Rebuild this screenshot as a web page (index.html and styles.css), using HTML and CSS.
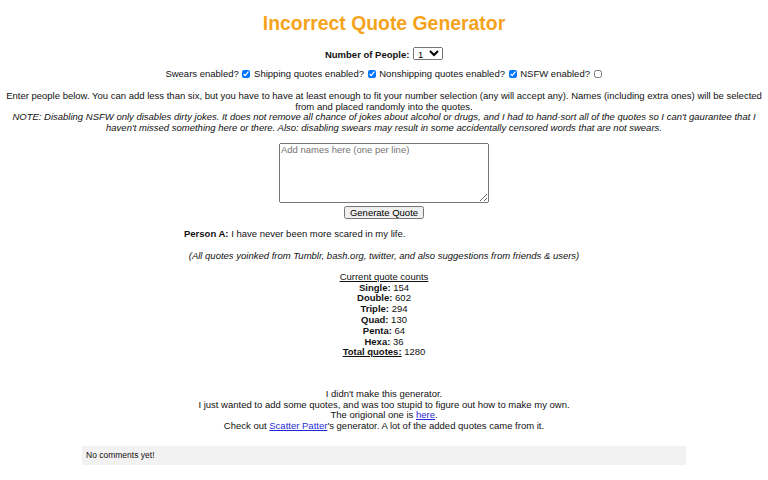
FILE: index.html
```html
<!DOCTYPE html>
<html lang="en">
<head>
  <meta charset="UTF-8" />
  <title>Incorrect Quote Generator</title>
  <meta name="viewport" content="width=device-width, initial-scale=1.0"/>
  <link rel="stylesheet" href="styles.css">
</head>
<body>

  <h1 class="title">Incorrect Quote Generator</h1>

  <div class="row">
    <b>Number of People:</b>
    <select class="people">
      <option>1</option>
      <option>2</option>
      <option>3</option>
      <option>4</option>
      <option>5</option>
      <option>6</option>
    </select>
  </div>

  <div class="row options">
    Swears enabled? <input type="checkbox" checked>
    Shipping quotes enabled? <input type="checkbox" checked>
    Nonshipping quotes enabled? <input type="checkbox" checked>
    NSFW enabled? <input type="checkbox">
  </div>

  <div class="info">
    Enter people below. You can add less than six, but you have to have at least enough to fit your number selection (any will accept any). Names (including extra ones) will be selected from and placed randomly into the quotes.<br>
    <i>NOTE: Disabling NSFW only disables dirty jokes. It does not remove all chance of jokes about alcohol or drugs, and I had to hand-sort all of the quotes so I can't gaurantee that I haven't missed something here or there. Also: disabling swears may result in some accidentally censored words that are not swears.</i>
  </div>

  <div class="names">
    <textarea placeholder="Add names here (one per line)"></textarea>
    <button class="generate">Generate Quote</button>
  </div>

  <div class="quote">
    <b>Person A:</b> I have never been more scared in my life.
  </div>

  <p class="credit"><i>(All quotes yoinked from Tumblr, bash.org, twitter, and also suggestions from friends &amp; users)</i></p>

  <div class="counts">
    <u>Current quote counts</u><br>
    <b>Single:</b> 154<br>
    <b>Double:</b> 602<br>
    <b>Triple:</b> 294<br>
    <b>Quad:</b> 130<br>
    <b>Penta:</b> 64<br>
    <b>Hexa:</b> 36<br>
    <b><u>Total quotes:</u></b> 1280
  </div>

  <div class="about">
    I didn't make this generator.<br>
    I just wanted to add some quotes, and was too stupid to figure out how to make my own.<br>
    The origional one is <a href="#">here</a>.<br>
    Check out <a href="#">Scatter Patter</a>'s generator. A lot of the added quotes came from it.
  </div>

  <div class="comments">No comments yet!</div>

</body>
</html>
```

FILE: styles.css
```css
body {
  margin: 0;
  padding: 0 4px;
  font-family: 'Liberation Sans', Arial, sans-serif;
  font-size: 9.5px;
  line-height: 10.6px;
  color: #111;
  text-align: center;
  background: white;
}

.title {
  color: #f5a31c;
  font-size: 19.4px;
  line-height: 24px;
  margin: 11px 0 12px;
}

.row {
  margin-bottom: 8px;
}

.people {
  font-size: 9.5px;
  height: 13px;
  width: 30px;
  padding: 0;
  margin-left: 1px;
}

.options input {
  width: 8px;
  height: 8px;
  margin: 0 1px;
  vertical-align: -1px;
}

.info {
  margin-top: 12px;
}

.names {
  margin-top: 9px;
}

.names textarea {
  display: block;
  margin: 0 auto;
  width: 210px;
  height: 60px;
  box-sizing: border-box;
  font-family: 'Liberation Sans', Arial, sans-serif;
  font-size: 9.5px;
  line-height: 10.6px;
  padding: 1px;
  resize: vertical;
}

.generate {
  margin-top: 3px;
  height: 13px;
  font-family: 'Liberation Sans', Arial, sans-serif;
  font-size: 9.5px;
  padding: 0 4px;
  line-height: 10px;
}

.quote {
  width: 400px;
  margin: 10px auto 0;
  text-align: left;
}

.credit {
  margin: 12px 0 10px;
}

.counts {
  margin-top: 10px;
  line-height: 10.8px;
}

.about {
  margin-top: 31px;
}

.about a {
  color: #1f2bd6;
}

.comments {
  width: 596px;
  margin: 14px auto 0;
  padding: 5px 4px;
  background: #f2f2f2;
  text-align: left;
  font-size: 8.5px;
  line-height: 9px;
}
```
